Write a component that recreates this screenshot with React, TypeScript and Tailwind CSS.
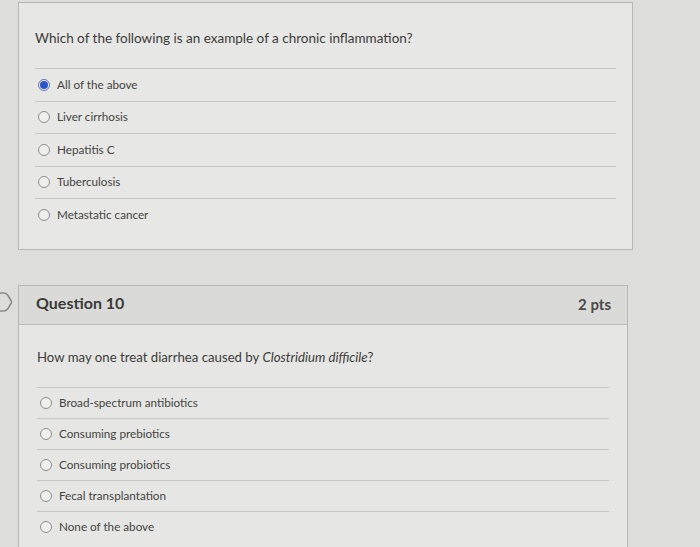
import React from 'react';

interface Option {
  label: string;
  selected?: boolean;
}

const q9Options: Option[] = [
  { label: 'All of the above', selected: true },
  { label: 'Liver cirrhosis' },
  { label: 'Hepatitis C' },
  { label: 'Tuberculosis' },
  { label: 'Metastatic cancer' },
];

const q10Options: Option[] = [
  { label: 'Broad-spectrum antibiotics' },
  { label: 'Consuming prebiotics' },
  { label: 'Consuming probiotics' },
  { label: 'Fecal transplantation' },
  { label: 'None of the above' },
];

const Radio: React.FC<{ selected?: boolean }> = ({ selected }) =>
  selected ? (
    <span className="flex h-[12px] w-[12px] items-center justify-center rounded-full border border-[#5d72b3] bg-[#f2f2f0]">
      <span className="h-[8px] w-[8px] rounded-full bg-[#2b55c6]" />
    </span>
  ) : (
    <span className="h-[12px] w-[12px] rounded-full border border-[#8d8d8b] bg-[#efefed]" />
  );

const AnswerRow: React.FC<{ option: Option; height: string }> = ({ option, height }) => (
  <div className={`flex items-center gap-[7px] border-t border-[#c6c6c4] pl-[3px] ${height}`}>
    <Radio selected={option.selected} />
    <span className="text-[11.7px] text-[#444442]">{option.label}</span>
  </div>
);

const BookmarkIcon = () => (
  <svg width="18" height="22" viewBox="0 0 18 22" fill="none">
    <path
      d="M-6 2 H4 Q6.5 2 8 4.5 L11 9.5 Q12 11 11 12.5 L8 17.5 Q6.5 20 4 20 H-6"
      stroke="#8a8a88"
      strokeWidth="1.5"
    />
  </svg>
);

export default function App() {
  return (
    <div
      className="min-h-[547px] w-[700px] overflow-hidden bg-[#dddddb] text-[#3c3c3a]"
      style={{ fontFamily: 'Lato, "Open Sans", sans-serif' }}
    >
      {/* previous question (Q9) */}
      <div className="ml-[18px] pt-[2px]">
        <div className="w-[615px] border border-[#b7b7b5] bg-[#e7e7e5] px-[16px] pt-[25px] pb-[18px]">
          <p className="text-[13.5px] leading-[20px]">
            Which of the following is an example of a chronic inflammation?
          </p>
          <div className="mt-[20px]">
            {q9Options.map((o) => (
              <AnswerRow key={o.label} option={o} height="h-[32.5px]" />
            ))}
          </div>
        </div>
      </div>

      {/* Question 10 */}
      <div className="mt-[35px] flex">
        <div className="w-[18px] pt-[6px]">
          <BookmarkIcon />
        </div>
        <div className="w-[610px] border border-[#b7b7b5] bg-[#e6e6e4]">
          <div className="flex h-[39px] items-center justify-between border-b border-[#bdbdbb] bg-[#dadad8] pl-[17px] pr-[16px]">
            <h2 className="mb-[4px] text-[16px] font-bold text-[#3a3a38]">Question 10</h2>
            <span className="text-[15px] font-bold text-[#4a4a48]">2 pts</span>
          </div>
          <div className="px-[18px] pt-[22px] pb-[10px]">
            <p className="text-[13.2px] leading-[20px]">
              How may one treat diarrhea caused by <i>Clostridium difficile</i>?
            </p>
            <div className="mt-[20px]">
              {q10Options.map((o) => (
                <AnswerRow key={o.label} option={o} height="h-[31px]" />
              ))}
            </div>
          </div>
        </div>
      </div>
    </div>
  );
}
